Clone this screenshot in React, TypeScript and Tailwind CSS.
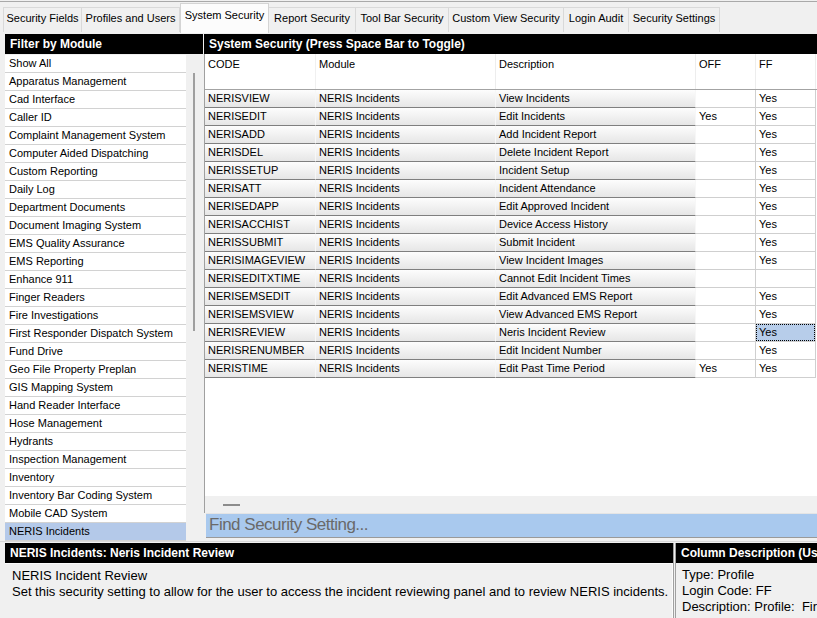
import React from "react";

const tabs = [
  { label: "Security Fields", w: "w-[79px]" },
  { label: "Profiles and Users", w: "w-[98px]" },
  { label: "System Security", w: "w-[89px]", active: true },
  { label: "Report Security", w: "w-[87px]" },
  { label: "Tool Bar Security", w: "w-[93px]" },
  { label: "Custom View Security", w: "w-[115px]" },
  { label: "Login Audit", w: "w-[65px]" },
  { label: "Security Settings", w: "w-[91px]" },
];

const modules = [
  "Show All",
  "Apparatus Management",
  "Cad Interface",
  "Caller ID",
  "Complaint Management System",
  "Computer Aided Dispatching",
  "Custom Reporting",
  "Daily Log",
  "Department Documents",
  "Document Imaging System",
  "EMS Quality Assurance",
  "EMS Reporting",
  "Enhance 911",
  "Finger Readers",
  "Fire Investigations",
  "First Responder Dispatch System",
  "Fund Drive",
  "Geo File Property Preplan",
  "GIS Mapping System",
  "Hand Reader Interface",
  "Hose Management",
  "Hydrants",
  "Inspection Management",
  "Inventory",
  "Inventory Bar Coding System",
  "Mobile CAD System",
  "NERIS Incidents",
];

type Row = { code: string; desc: string; off?: boolean; ff?: boolean; sel?: boolean };

const rows: Row[] = [
  { code: "NERISVIEW", desc: "View Incidents", ff: true },
  { code: "NERISEDIT", desc: "Edit Incidents", off: true, ff: true },
  { code: "NERISADD", desc: "Add Incident Report", ff: true },
  { code: "NERISDEL", desc: "Delete Incident Report", ff: true },
  { code: "NERISSETUP", desc: "Incident Setup", ff: true },
  { code: "NERISATT", desc: "Incident Attendance", ff: true },
  { code: "NERISEDAPP", desc: "Edit Approved Incident", ff: true },
  { code: "NERISACCHIST", desc: "Device Access History", ff: true },
  { code: "NERISSUBMIT", desc: "Submit Incident", ff: true },
  { code: "NERISIMAGEVIEW", desc: "View Incident Images", ff: true },
  { code: "NERISEDITXTIME", desc: "Cannot Edit Incident Times" },
  { code: "NERISEMSEDIT", desc: "Edit Advanced EMS Report", ff: true },
  { code: "NERISEMSVIEW", desc: "View Advanced EMS Report", ff: true },
  { code: "NERISREVIEW", desc: "Neris Incident Review", ff: true, sel: true },
  { code: "NERISRENUMBER", desc: "Edit Incident Number", ff: true },
  { code: "NERISTIME", desc: "Edit Past Time Period", off: true, ff: true },
];

const PanelHeader = ({ children }: { children: React.ReactNode }) => (
  <div className="h-[20px] shrink-0 bg-black text-white font-bold text-[12px] leading-[20px] pl-[5px] whitespace-nowrap overflow-hidden">
    {children}
  </div>
);

const gradCell = "h-[18px] leading-[17px] pl-[3px] bg-linear-to-b from-[#fdfdfd] to-[#e6e6e6] border-b border-b-[#7f7f7f] border-r border-r-[#f7f7f7] whitespace-nowrap overflow-hidden";
const plainCell = "h-[18px] leading-[17px] pl-[3px] bg-white border-b border-r border-[#cfcfcf]";

export default function App() {
  return (
    <div className="w-[817px] h-[618px] overflow-hidden bg-[#f0f0f0] text-black text-[11px] flex flex-col [font-family:'Liberation_Sans',Arial,sans-serif]">
      {/* tab strip */}
      <div className="h-[32px] mt-px border-t border-[#a9a9a9] flex items-end pl-[3px]">
        {tabs.map((t, i) =>
          t.active ? (
            <div
              key={t.label}
              className={`${t.w} shrink-0 h-[30px] bg-[#fcfcfc] border border-b-0 border-[#d4d4d4] text-center leading-[22px]`}
            >
              {t.label}
            </div>
          ) : (
            <div
              key={t.label}
              className={`${t.w} shrink-0 h-[25px] mb-[1px] bg-[#f0f0f0] border-t border-r border-[#d9d9d9] ${
                i === 0 ? "border-l" : ""
              } text-center leading-[20px] whitespace-nowrap`}
            >
              {t.label}
            </div>
          )
        )}
      </div>

      {/* main split */}
      <div className="h-[507px] mt-px flex pl-[5px]">
        {/* filter by module */}
        <div className="w-[198px] shrink-0 flex flex-col">
          <PanelHeader>Filter by Module</PanelHeader>
          <div className="flex mt-px flex-1">
            <div className="w-[181px] bg-white">
              {modules.map((m) => (
                <div
                  key={m}
                  className={`h-[18px] leading-[17px] pl-[4px] border-b border-[#d2d2d2] whitespace-nowrap ${
                    m === "NERIS Incidents" ? "bg-[#b4c9e9]" : ""
                  }`}
                >
                  {m}
                </div>
              ))}
            </div>
            <div className="w-[17px] bg-[#f0f0f0] pt-[18px]">
              <div className="ml-[7px] w-[2px] h-[258px] bg-[#9f9f9f]" />
            </div>
          </div>
        </div>

        {/* system security grid */}
        <div className="ml-px flex-1 min-w-0 flex flex-col">
          <PanelHeader>System Security (Press Space Bar to Toggle)</PanelHeader>
          <div className="h-[442px] bg-white border-l border-[#a0a0a0]">
            <div className="h-[36px] flex border-b border-[#a3a3a3]">
              <div className="w-[111px] pl-[3px] pt-[2px] border-r border-[#f0f0f0]">CODE</div>
              <div className="w-[180px] pl-[3px] pt-[2px] border-r border-[#ededed]">Module</div>
              <div className="w-[200px] pl-[3px] pt-[2px] border-r border-[#ededed]">Description</div>
              <div className="w-[60px] pl-[3px] pt-[2px] border-r border-[#ededed]">OFF</div>
              <div className="w-[60px] pl-[3px] pt-[2px] border-r border-[#ededed]">FF</div>
            </div>
            {rows.map((r) => (
              <div key={r.code} className="flex">
                <div className={`w-[111px] ${gradCell}`}>{r.code}</div>
                <div className={`w-[180px] ${gradCell}`}>NERIS Incidents</div>
                <div className={`w-[200px] ${gradCell}`}>{r.desc}</div>
                <div className={`w-[60px] ${plainCell}`}>{r.off ? "Yes" : ""}</div>
                {r.sel ? (
                  <div className="w-[60px] h-[18px] border-b border-r border-[#cfcfcf]">
                    <div className="h-[17px] leading-[15px] pl-[2px] bg-[#b7cdea] border border-dotted border-black">
                      Yes
                    </div>
                  </div>
                ) : (
                  <div className={`w-[60px] ${plainCell}`}>{r.ff ? "Yes" : ""}</div>
                )}
              </div>
            ))}
          </div>
          <div className="h-[17px] border-l border-[#a0a0a0] flex items-center pl-[18px]">
            <div className="w-[17px] h-[2px] bg-[#8c8c8c]" />
          </div>
          <div className="h-[25px] ml-[2px] bg-[#a9c9ee] border-t border-[#e4e4e4] border-b border-b-[#9a9a9a] text-[#6a6a6a] text-[17px] leading-[22px] pl-[3px] tracking-[-0.5px] whitespace-nowrap">
            Find Security Setting...
          </div>
        </div>
      </div>

      {/* bottom panels */}
      <div className="flex-1 flex pl-[5px] pt-px border-t border-[#d8d8d8]">
        <div className="w-[669px] shrink-0 flex flex-col border-r border-[#a0a0a0]">
          <PanelHeader>NERIS Incidents: Neris Incident Review</PanelHeader>
          <div className="flex-1 bg-[#f0f0f0] border-t border-r border-[#fbfbfb] pl-[7px] pt-[4px] text-[13px] leading-[16px]">
            <div>NERIS Incident Review</div>
            <div className="whitespace-nowrap">
              Set this security setting to allow for the user to access the incident reviewing panel and to review NERIS incidents.
            </div>
          </div>
        </div>
        <div className="ml-px flex-1 min-w-0 flex flex-col border-l border-[#a0a0a0]">
          <PanelHeader>Column Description (User Profile)</PanelHeader>
          <div className="flex-1 pl-[6px] pt-[4px] text-[13px] leading-[16px] whitespace-pre overflow-hidden">
            <div>Type: Profile</div>
            <div>Login Code: FF</div>
            <div>Description: Profile:  Firefighter</div>
          </div>
        </div>
      </div>
    </div>
  );
}
